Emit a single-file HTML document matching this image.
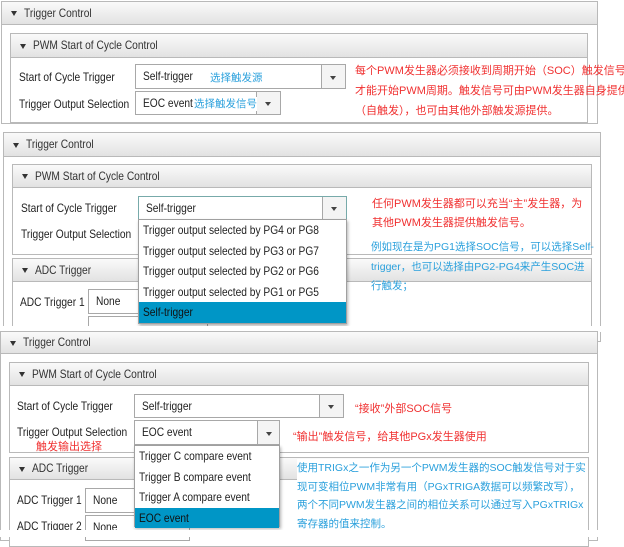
<!DOCTYPE html>
<html><head><meta charset="utf-8"><style>
*{margin:0;padding:0;box-sizing:border-box}
body{width:624px;height:537px;background:#fff;position:relative;overflow:hidden;font-family:"Liberation Sans","Noto Sans CJK SC",sans-serif;font-size:12px;color:#222}
.a{position:absolute}
.n{display:inline-block;transform:scaleX(.85);transform-origin:0 50%;white-space:nowrap}
.box{position:absolute;border:1px solid #b9b9b9;background:#fff}
.hd{position:absolute;background:linear-gradient(#fafafa,#e2e2e2);border:1px solid #b9b9b9;color:#333;font-size:12px;padding-left:22px;white-space:nowrap}
.hd:before{content:"";position:absolute;left:9px;top:50%;margin-top:-2px;border-left:3.5px solid transparent;border-right:3.5px solid transparent;border-top:5px solid #333}
.cb{position:absolute;border:1px solid #a8a8a8;background:#fff;padding-left:7px;font-size:12px;white-space:nowrap}
.ar{position:absolute;right:0;top:0;bottom:0;width:24px;border-left:1px solid #a8a8a8;background:#f4f4f4}
.ar:before{content:"";position:absolute;left:8px;top:50%;margin-top:-1px;border-left:3.5px solid transparent;border-right:3.5px solid transparent;border-top:4px solid #444}
.lb{position:absolute;font-size:12px;white-space:nowrap;line-height:14px}
.red{position:absolute;color:#f03030;font-size:11px;white-space:nowrap}
.blue{position:absolute;color:#2aa0dc;font-size:11px;white-space:nowrap}
.dd{position:absolute;background:#fff;border:1px solid #a0a0a0;box-shadow:1px 2px 3px rgba(0,0,0,.3)}
.dd div{height:20.5px;line-height:20px;padding-left:4px;font-size:12px;white-space:nowrap}
.dd .s{background:#0096c6;color:#111}
</style></head><body>

<!-- Section 1 -->
<div class="box" style="left:1px;top:1px;width:597px;height:123px"></div>
<div class="hd" style="left:1px;top:1px;width:597px;height:24px;line-height:22px"><span class="n">Trigger Control</span></div>
<div class="box" style="left:10px;top:33px;width:578px;height:90px"></div>
<div class="hd" style="left:10px;top:33px;width:578px;height:25px;line-height:23px;padding-left:22px"><span class="n">PWM Start of Cycle Control</span></div>
<div class="lb" style="left:19px;top:70px"><span class="n">Start of Cycle Trigger</span></div>
<div class="cb" style="left:135px;top:64px;width:211px;height:25px;line-height:23px"><span class="n">Self-trigger</span><div class="ar"></div></div>
<div class="blue" style="left:210px;top:71px;font-size:10.5px;line-height:14px">选择触发源</div>
<div class="lb" style="left:19px;top:97px"><span class="n">Trigger Output Selection</span></div>
<div class="cb" style="left:135px;top:91px;width:146px;height:24px;line-height:22px"><span class="n">EOC event</span><div class="ar"></div></div>
<div class="blue" style="left:194px;top:97px;font-size:10.5px;line-height:14px;background:#fff">选择触发信号</div>
<div class="red" style="left:355px;top:61px;line-height:20px">每个PWM发生器必须接收到周期开始（SOC）触发信号<br>才能开始PWM周期。触发信号可由PWM发生器自身提供<br>（自触发），也可由其他外部触发源提供。</div>

<!-- Section 2 -->
<div class="box" style="left:3px;top:132px;width:598px;height:210px"></div>
<div class="hd" style="left:3px;top:132px;width:598px;height:25px;line-height:23px"><span class="n">Trigger Control</span></div>
<div class="box" style="left:12px;top:164px;width:580px;height:91px"></div>
<div class="hd" style="left:12px;top:164px;width:580px;height:24px;line-height:22px"><span class="n">PWM Start of Cycle Control</span></div>
<div class="lb" style="left:21px;top:201px"><span class="n">Start of Cycle Trigger</span></div>
<div class="cb" style="left:138px;top:196px;width:209px;height:24px;line-height:22px;border-color:#7aa"><span class="n">Self-trigger</span><div class="ar"></div></div>
<div class="lb" style="left:21px;top:227px"><span class="n">Trigger Output Selection</span></div>
<div class="box" style="left:12px;top:258px;width:580px;height:80px"></div>
<div class="hd" style="left:12px;top:258px;width:580px;height:24px;line-height:22px"><span class="n">ADC Trigger</span></div>
<div class="lb" style="left:20px;top:295px"><span class="n">ADC Trigger 1</span></div>
<div class="cb" style="left:88px;top:289px;width:120px;height:25px;line-height:23px"><span class="n">None</span></div>
<div class="cb" style="left:88px;top:316px;width:120px;height:24px"></div>
<div class="red" style="left:372px;top:195px;line-height:19px;font-size:11px">任何PWM发生器都可以充当“主”发生器，为<br>其他PWM发生器提供触发信号。</div>
<div class="blue" style="left:371px;top:238px;line-height:19.5px;font-size:10.5px">例如现在是为PG1选择SOC信号，可以选择Self-<br>trigger，也可以选择由PG2-PG4来产生SOC进<br>行触发；</div>
<div class="dd" style="left:138px;top:219px;width:209px;height:105px">
<div><span class="n">Trigger output selected by PG4 or PG8</span></div>
<div><span class="n">Trigger output selected by PG3 or PG7</span></div>
<div><span class="n">Trigger output selected by PG2 or PG6</span></div>
<div><span class="n">Trigger output selected by PG1 or PG5</span></div>
<div class="s"><span class="n">Self-trigger</span></div>
</div>
<div class="a" style="left:0;top:326px;width:624px;height:6px;background:#fff"></div>

<!-- Section 3 -->
<div class="box" style="left:0;top:331px;width:598px;height:210px"></div>
<div class="hd" style="left:0;top:331px;width:598px;height:23px;line-height:21px"><span class="n">Trigger Control</span></div>
<div class="box" style="left:9px;top:362px;width:580px;height:91px"></div>
<div class="hd" style="left:9px;top:362px;width:580px;height:24px;line-height:22px"><span class="n">PWM Start of Cycle Control</span></div>
<div class="lb" style="left:17px;top:399px"><span class="n">Start of Cycle Trigger</span></div>
<div class="cb" style="left:134px;top:394px;width:210px;height:24px;line-height:22px"><span class="n">Self-trigger</span><div class="ar"></div></div>
<div class="red" style="left:355px;top:401px;font-size:11px;line-height:16px">“接收”外部SOC信号</div>
<div class="lb" style="left:17px;top:425px"><span class="n">Trigger Output Selection</span></div>
<div class="cb" style="left:134px;top:420px;width:146px;height:25px;line-height:23px"><span class="n">EOC event</span><div class="ar" style="width:22px"></div></div>
<div class="red" style="left:36px;top:439px;font-size:11px;line-height:16px">触发输出选择</div>
<div class="red" style="left:293px;top:429px;font-size:11px;line-height:16px">“输出”触发信号，给其他PGx发生器使用</div>
<div class="box" style="left:9px;top:457px;width:580px;height:90px"></div>
<div class="hd" style="left:9px;top:457px;width:580px;height:23px;line-height:21px"><span class="n">ADC Trigger</span></div>
<div class="lb" style="left:17px;top:493px"><span class="n">ADC Trigger 1</span></div>
<div class="cb" style="left:85px;top:488px;width:120px;height:25px;line-height:23px"><span class="n">None</span></div>
<div class="lb" style="left:17px;top:519px"><span class="n">ADC Trigger 2</span></div>
<div class="cb" style="left:85px;top:515px;width:105px;height:26px;line-height:23px"><span class="n">None</span></div>
<div class="blue" style="left:297px;top:459px;line-height:18.5px;font-size:10.5px;background:#fff;width:291px">使用TRIGx之一作为另一个PWM发生器的SOC触发信号对于实<br>现可变相位PWM非常有用（PGxTRIGA数据可以频繁改写），<br>两个不同PWM发生器之间的相位关系可以通过写入PGxTRIGx<br>寄存器的值来控制。</div>
<div class="dd" style="left:134px;top:445px;width:146px;height:82px">
<div><span class="n">Trigger C compare event</span></div>
<div><span class="n">Trigger B compare event</span></div>
<div><span class="n">Trigger A compare event</span></div>
<div class="s"><span class="n">EOC event</span></div>
</div>
<div class="a" style="left:0;top:530px;width:624px;height:7px;background:#fff"></div>
</body></html>
